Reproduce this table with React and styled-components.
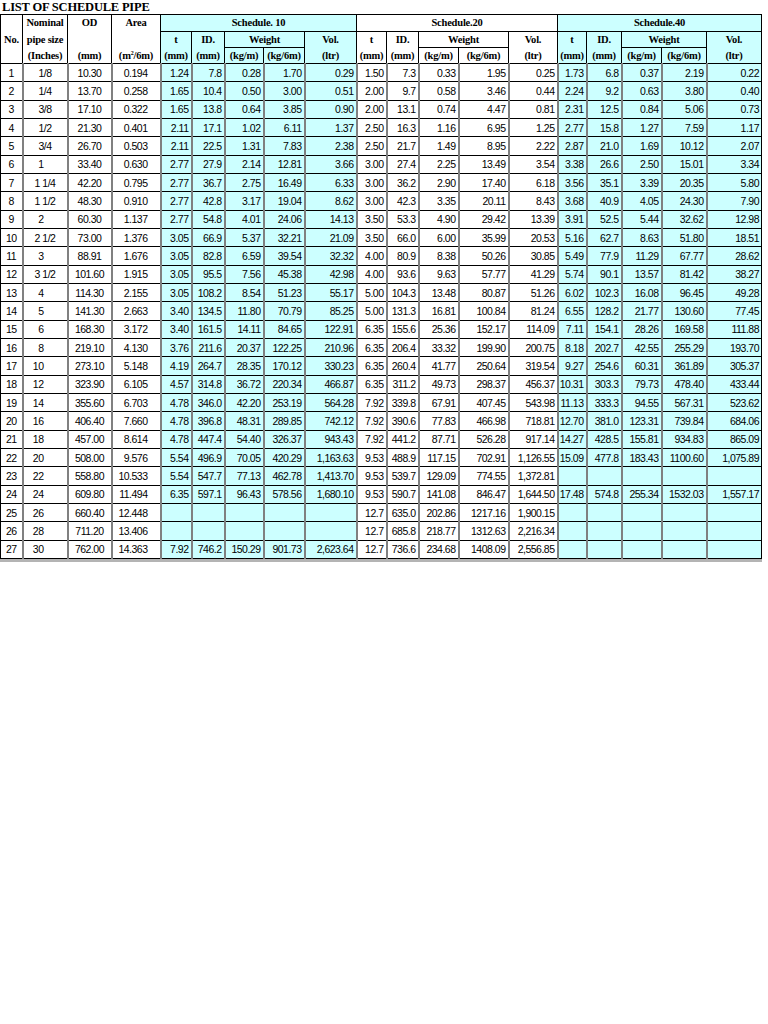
import React from "react";
import styled, { createGlobalStyle, css } from "styled-components";

const GlobalStyle = createGlobalStyle`
  html, body { margin: 0; padding: 0; background: #ffffff; }
  body { font-family: "Liberation Sans", Arial, sans-serif; color: #000; }
`;

const CYAN = "#ccffff";

const Page = styled.div`
  width: 768px;
  min-height: 1024px;
  background: #fff;
`;

const Title = styled.h1`
  margin: 0;
  padding-left: 2px;
  height: 14px;
  line-height: 14px;
  font-family: "Liberation Serif", "Times New Roman", serif;
  font-weight: bold;
  font-size: 12.5px;
  letter-spacing: -0.2px;
  white-space: nowrap;
`;

const Table = styled.table`
  border-collapse: collapse;
  table-layout: fixed;
  width: 761px;
  box-shadow: 0 3px 0 #b4b4b4;
`;

const HeadCell = styled.th`
  background: ${(p) => (p.$tint ? CYAN : "#fff")};
  border-left: 1px solid #000;
  border-right: 1px solid #000;
  border-top: ${(p) => (p.$cont ? "none" : "1px solid #000")};
  border-bottom: ${(p) => (p.$open ? "none" : "1px solid #000")};
  padding: 0;
  height: ${(p) => p.$h}px;
  font-family: "Liberation Serif", "Times New Roman", serif;
  font-weight: bold;
  font-size: 10.5px;
  letter-spacing: -0.2px;
  line-height: ${(p) => p.$h}px;
  text-align: center;
  white-space: nowrap;
  overflow: hidden;
`;

const Sup = styled.sup`
  font-size: 6px;
  line-height: 0;
`;

const Row = styled.tr``;

const DataCell = styled.td`
  background: ${(p) => (p.$tint ? CYAN : "#fff")};
  border-top: 1px solid #000;
  border-bottom: 1px solid #000;
  border-left: 2px solid #808080;
  border-right: 2px solid #808080;
  padding: 0 ${(p) => p.$pr ?? 2}px 0 0;
  height: 17.33px;
  line-height: 12px;
  font-size: 10.5px;
  letter-spacing: -0.5px;
  text-align: ${(p) => p.$align || "right"};
  vertical-align: middle;
  white-space: nowrap;
  overflow: hidden;
  ${(p) =>
    p.$first &&
    css`
      border-left: 1px solid #000;
    `}
  ${(p) =>
    p.$last &&
    css`
      border-right: 1px solid #000;
    `}
`;

const widths = [22, 45, 44, 49, 31, 33, 39, 41, 52, 30, 32, 40, 50, 49, 29, 35, 40, 45, 55];

const rows = [
  ["1", "1/8", "10.30", "0.194", ["1.24", "7.8", "0.28", "1.70", "0.29"], ["1.50", "7.3", "0.33", "1.95", "0.25"], ["1.73", "6.8", "0.37", "2.19", "0.22"]],
  ["2", "1/4", "13.70", "0.258", ["1.65", "10.4", "0.50", "3.00", "0.51"], ["2.00", "9.7", "0.58", "3.46", "0.44"], ["2.24", "9.2", "0.63", "3.80", "0.40"]],
  ["3", "3/8", "17.10", "0.322", ["1.65", "13.8", "0.64", "3.85", "0.90"], ["2.00", "13.1", "0.74", "4.47", "0.81"], ["2.31", "12.5", "0.84", "5.06", "0.73"]],
  ["4", "1/2", "21.30", "0.401", ["2.11", "17.1", "1.02", "6.11", "1.37"], ["2.50", "16.3", "1.16", "6.95", "1.25"], ["2.77", "15.8", "1.27", "7.59", "1.17"]],
  ["5", "3/4", "26.70", "0.503", ["2.11", "22.5", "1.31", "7.83", "2.38"], ["2.50", "21.7", "1.49", "8.95", "2.22"], ["2.87", "21.0", "1.69", "10.12", "2.07"]],
  ["6", "1", "33.40", "0.630", ["2.77", "27.9", "2.14", "12.81", "3.66"], ["3.00", "27.4", "2.25", "13.49", "3.54"], ["3.38", "26.6", "2.50", "15.01", "3.34"]],
  ["7", "1 1/4", "42.20", "0.795", ["2.77", "36.7", "2.75", "16.49", "6.33"], ["3.00", "36.2", "2.90", "17.40", "6.18"], ["3.56", "35.1", "3.39", "20.35", "5.80"]],
  ["8", "1 1/2", "48.30", "0.910", ["2.77", "42.8", "3.17", "19.04", "8.62"], ["3.00", "42.3", "3.35", "20.11", "8.43"], ["3.68", "40.9", "4.05", "24.30", "7.90"]],
  ["9", "2", "60.30", "1.137", ["2.77", "54.8", "4.01", "24.06", "14.13"], ["3.50", "53.3", "4.90", "29.42", "13.39"], ["3.91", "52.5", "5.44", "32.62", "12.98"]],
  ["10", "2 1/2", "73.00", "1.376", ["3.05", "66.9", "5.37", "32.21", "21.09"], ["3.50", "66.0", "6.00", "35.99", "20.53"], ["5.16", "62.7", "8.63", "51.80", "18.51"]],
  ["11", "3", "88.91", "1.676", ["3.05", "82.8", "6.59", "39.54", "32.32"], ["4.00", "80.9", "8.38", "50.26", "30.85"], ["5.49", "77.9", "11.29", "67.77", "28.62"]],
  ["12", "3 1/2", "101.60", "1.915", ["3.05", "95.5", "7.56", "45.38", "42.98"], ["4.00", "93.6", "9.63", "57.77", "41.29"], ["5.74", "90.1", "13.57", "81.42", "38.27"]],
  ["13", "4", "114.30", "2.155", ["3.05", "108.2", "8.54", "51.23", "55.17"], ["5.00", "104.3", "13.48", "80.87", "51.26"], ["6.02", "102.3", "16.08", "96.45", "49.28"]],
  ["14", "5", "141.30", "2.663", ["3.40", "134.5", "11.80", "70.79", "85.25"], ["5.00", "131.3", "16.81", "100.84", "81.24"], ["6.55", "128.2", "21.77", "130.60", "77.45"]],
  ["15", "6", "168.30", "3.172", ["3.40", "161.5", "14.11", "84.65", "122.91"], ["6.35", "155.6", "25.36", "152.17", "114.09"], ["7.11", "154.1", "28.26", "169.58", "111.88"]],
  ["16", "8", "219.10", "4.130", ["3.76", "211.6", "20.37", "122.25", "210.96"], ["6.35", "206.4", "33.32", "199.90", "200.75"], ["8.18", "202.7", "42.55", "255.29", "193.70"]],
  ["17", "10", "273.10", "5.148", ["4.19", "264.7", "28.35", "170.12", "330.23"], ["6.35", "260.4", "41.77", "250.64", "319.54"], ["9.27", "254.6", "60.31", "361.89", "305.37"]],
  ["18", "12", "323.90", "6.105", ["4.57", "314.8", "36.72", "220.34", "466.87"], ["6.35", "311.2", "49.73", "298.37", "456.37"], ["10.31", "303.3", "79.73", "478.40", "433.44"]],
  ["19", "14", "355.60", "6.703", ["4.78", "346.0", "42.20", "253.19", "564.28"], ["7.92", "339.8", "67.91", "407.45", "543.98"], ["11.13", "333.3", "94.55", "567.31", "523.62"]],
  ["20", "16", "406.40", "7.660", ["4.78", "396.8", "48.31", "289.85", "742.12"], ["7.92", "390.6", "77.83", "466.98", "718.81"], ["12.70", "381.0", "123.31", "739.84", "684.06"]],
  ["21", "18", "457.00", "8.614", ["4.78", "447.4", "54.40", "326.37", "943.43"], ["7.92", "441.2", "87.71", "526.28", "917.14"], ["14.27", "428.5", "155.81", "934.83", "865.09"]],
  ["22", "20", "508.00", "9.576", ["5.54", "496.9", "70.05", "420.29", "1,163.63"], ["9.53", "488.9", "117.15", "702.91", "1,126.55"], ["15.09", "477.8", "183.43", "1100.60", "1,075.89"]],
  ["23", "22", "558.80", "10.533", ["5.54", "547.7", "77.13", "462.78", "1,413.70"], ["9.53", "539.7", "129.09", "774.55", "1,372.81"], null],
  ["24", "24", "609.80", "11.494", ["6.35", "597.1", "96.43", "578.56", "1,680.10"], ["9.53", "590.7", "141.08", "846.47", "1,644.50"], ["17.48", "574.8", "255.34", "1532.03", "1,557.17"]],
  ["25", "26", "660.40", "12.448", null, ["12.7", "635.0", "202.86", "1217.16", "1,900.15"], null],
  ["26", "28", "711.20", "13.406", null, ["12.7", "685.8", "218.77", "1312.63", "2,216.34"], null],
  ["27", "30", "762.00", "14.363", ["7.92", "746.2", "150.29", "901.73", "2,623.64"], ["12.7", "736.6", "234.68", "1408.09", "2,556.85"], null],
];

const schedules = [
  { name: "Schedule. 10", tint: true },
  { name: "Schedule.20", tint: false },
  { name: "Schedule.40", tint: true },
];

const empty = ["", "", "", "", ""];

export default function App() {
  return (
    <Page>
      <GlobalStyle />
      <Title>LIST OF SCHEDULE PIPE</Title>
      <Table>
        <colgroup>
          {widths.map((w, i) => (
            <col key={i} style={{ width: w }} />
          ))}
        </colgroup>
        <thead>
          <tr>
            <HeadCell $h={16} $open></HeadCell>
            <HeadCell $h={16} $open>Nominal</HeadCell>
            <HeadCell $h={16} $open>OD</HeadCell>
            <HeadCell $h={16} $open>Area</HeadCell>
            {schedules.map((s) => (
              <HeadCell key={s.name} $h={16} colSpan={5} $tint={s.tint}>
                {s.name}
              </HeadCell>
            ))}
          </tr>
          <tr>
            <HeadCell $h={15} $cont $open>No.</HeadCell>
            <HeadCell $h={15} $cont $open>pipe size</HeadCell>
            <HeadCell $h={15} $cont $open></HeadCell>
            <HeadCell $h={15} $cont $open></HeadCell>
            {schedules.map((s) => (
              <React.Fragment key={s.name}>
                <HeadCell $h={15} $open $tint={s.tint}>t</HeadCell>
                <HeadCell $h={15} $open $tint={s.tint}>ID.</HeadCell>
                <HeadCell $h={15} colSpan={2} $tint={s.tint}>Weight</HeadCell>
                <HeadCell $h={15} $open $tint={s.tint}>Vol.</HeadCell>
              </React.Fragment>
            ))}
          </tr>
          <tr>
            <HeadCell $h={15} $cont></HeadCell>
            <HeadCell $h={15} $cont>(Inches)</HeadCell>
            <HeadCell $h={15} $cont>(mm)</HeadCell>
            <HeadCell $h={15} $cont>
              (m<Sup>2</Sup>/6m)
            </HeadCell>
            {schedules.map((s) => (
              <React.Fragment key={s.name}>
                <HeadCell $h={15} $cont $tint={s.tint}>(mm)</HeadCell>
                <HeadCell $h={15} $cont $tint={s.tint}>(mm)</HeadCell>
                <HeadCell $h={15} $tint={s.tint}>(kg/m)</HeadCell>
                <HeadCell $h={15} $tint={s.tint}>(kg/6m)</HeadCell>
                <HeadCell $h={15} $cont $tint={s.tint}>(ltr)</HeadCell>
              </React.Fragment>
            ))}
          </tr>
        </thead>
        <tbody>
          {rows.map(([no, size, od, area, ...sch]) => {
            const isInt = /^\d+$/.test(size);
            return (
              <Row key={no}>
                <DataCell $first $align="center" $pr={0}>{no}</DataCell>
                <DataCell $align={isInt ? "right" : "center"} $pr={isInt ? 23 : 0}>
                  {size}
                </DataCell>
                <DataCell $align="center" $pr={0}>{od}</DataCell>
                <DataCell $pr={12}>{area}</DataCell>
                {sch.map((vals, si) =>
                  (vals || empty).map((v, vi) => (
                    <DataCell
                      key={`${si}-${vi}`}
                      $tint={schedules[si].tint}
                      $last={si === 2 && vi === 4}
                    >
                      {v}
                    </DataCell>
                  ))
                )}
              </Row>
            );
          })}
        </tbody>
      </Table>
    </Page>
  );
}
